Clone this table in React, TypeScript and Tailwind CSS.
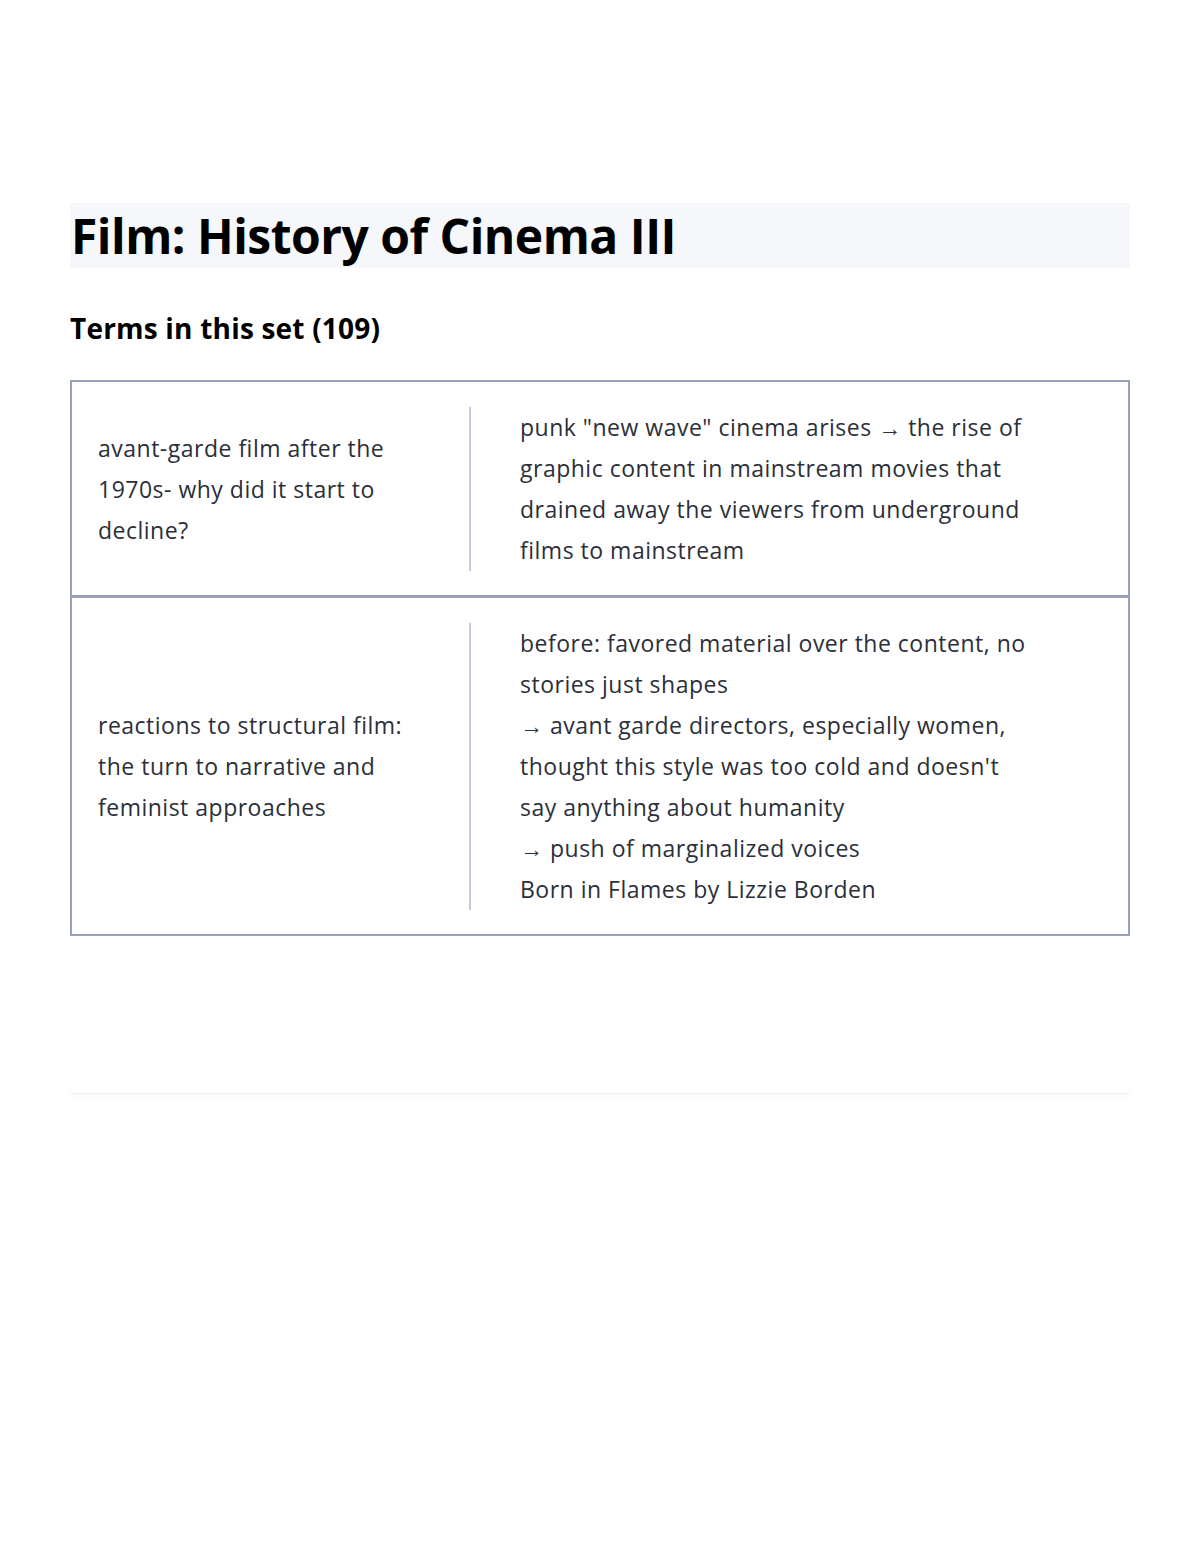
const TERMS: ReadonlyArray<{ term: string[]; definition: string[] }> = [
  {
    term: ['avant-garde film after the', '1970s- why did it start to', 'decline?'],
    definition: [
      'punk "new wave" cinema arises → the rise of',
      'graphic content in mainstream movies that',
      'drained away the viewers from underground',
      'films to mainstream',
    ],
  },
  {
    term: ['reactions to structural film:', 'the turn to narrative and', 'feminist approaches'],
    definition: [
      'before: favored material over the content, no',
      'stories just shapes',
      '→ avant garde directors, especially women,',
      'thought this style was too cold and doesn\'t',
      'say anything about humanity',
      '→ push of marginalized voices',
      'Born in Flames by Lizzie Borden',
    ],
  },
]

export default function App() {
  return (
    <div className="min-h-[1553px] bg-white px-[70px] pt-[203px] font-['Open_Sans','Liberation_Sans',sans-serif] text-[#2b2f3a]">
      <h1 className="flex h-[65px] items-center bg-[#f6f7fb] pl-px text-[48px] font-bold leading-none tracking-[-0.5px] text-black">
        Film: History of Cinema III
      </h1>

      <h2 className="mt-[46px] text-[28px] font-bold leading-none tracking-[0.2px] text-black">Terms in this set (109)</h2>

      <section className="mt-[38px] border-2 border-[#9aa0b6]">
        {TERMS.map((item, index) => (
          <div
            key={item.term[0]}
            className={`flex items-center pt-[25px] pb-[24px] ${index > 0 ? 'border-t-[3px] border-[#9aa0b6]' : ''}`}
          >
            <div className="w-[397px] shrink-0 whitespace-nowrap pl-[26px] text-[23px] leading-[41px] tracking-[0.5px]">
              {item.term.map((line) => (
                <p key={line}>{line}</p>
              ))}
            </div>
            <div className="self-stretch whitespace-nowrap border-l-2 border-[#c5c9d8] pl-[49px] text-[23px] leading-[41px] tracking-[0.5px]">
              {item.definition.map((line) => (
                <p key={line}>{line}</p>
              ))}
            </div>
          </div>
        ))}
      </section>

      <div className="mt-[157px] h-px rounded-b bg-[#f0f0f2] shadow-[0_2px_4px_rgba(0,0,0,0.08)]" />
    </div>
  )
}
